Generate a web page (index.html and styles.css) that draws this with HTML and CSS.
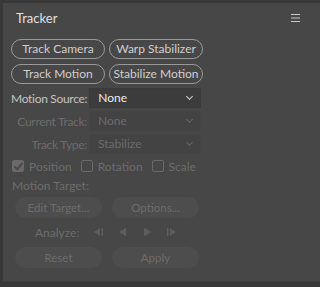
FILE: index.html
```html
<!DOCTYPE html>
<html lang="en">
<head>
    <meta charset="UTF-8">
    <title>Tracker</title>
    <link rel="stylesheet" href="styles.css">
</head>
<body>
    <div class="panel">
        <div class="panel-head">
            <span class="title">Tracker</span>
            <span class="menu">
                <svg width="9" height="8" viewBox="0 0 9 8"><path d="M0 .5h9M0 4h9M0 7.5h9" stroke="#c8c8c8" stroke-width="1"/></svg>
            </span>
        </div>

        <!-- main actions -->
        <div class="btn-grid">
            <button class="pill">Track Camera</button>
            <button class="pill">Warp Stabilizer</button>
            <button class="pill">Track Motion</button>
            <button class="pill">Stabilize Motion</button>
        </div>

        <div class="field">
            <label>Motion Source:</label>
            <div class="select">None<span class="chev"></span></div>
        </div>
        <div class="field off">
            <label>Current Track:</label>
            <div class="select">None<span class="chev"></span></div>
        </div>
        <div class="field off">
            <label>Track Type:</label>
            <div class="select">Stabilize<span class="chev"></span></div>
        </div>

        <div class="checks off">
            <span class="check on"><i class="box"></i>Position</span>
            <span class="check"><i class="box"></i>Rotation</span>
            <span class="check"><i class="box"></i>Scale</span>
        </div>

        <div class="sub off">Motion Target:</div>

        <div class="btn-pair">
            <button class="pill dim">Edit Target...</button>
            <button class="pill dim">Options...</button>
        </div>

        <div class="analyze off">
            <span class="lbl">Analyze:</span>
            <svg width="12" height="10" viewBox="0 0 12 10"><path d="M1 5l6-4v8z" fill="currentColor"/><rect x="8.5" y="1" width="1.6" height="8" fill="currentColor"/></svg>
            <svg width="12" height="10" viewBox="0 0 12 10"><path d="M2 5l7-4.5v9z" fill="currentColor"/></svg>
            <svg width="12" height="10" viewBox="0 0 12 10"><path d="M10 5l-7-4.5v9z" fill="currentColor"/></svg>
            <svg width="12" height="10" viewBox="0 0 12 10"><rect x="1.9" y="1" width="1.6" height="8" fill="currentColor"/><path d="M11 5l-6-4v8z" fill="currentColor"/></svg>
        </div>

        <div class="btn-pair">
            <button class="pill dim">Reset</button>
            <button class="pill dim">Apply</button>
        </div>
    </div>
</body>
</html>
```

FILE: styles.css
```css
* {
    box-sizing: border-box;
}

body {
    margin: 0;
    width: 320px;
    height: 287px;
    background-color: #383838;
    font-family: Lato, sans-serif;
    font-size: 12px;
    color: #c4c4c4;
    overflow: hidden;
}

.panel {
    margin: 3px 0 4px 3px;
    height: 279px;
    background-color: #474747;
    padding: 0 0 0 8px;
    border-bottom: 1px solid #3e3e3e;
}

.panel-head {
    display: flex;
    align-items: center;
    justify-content: space-between;
    height: 30px;
    padding: 0 20px 0 5px;
}

.title {
    font-size: 13px;
    color: #e0e0e0;
}

.menu svg {
    display: block;
}

.btn-grid {
    display: grid;
    grid-template-columns: 94px 94px;
    gap: 5px 4px;
    margin-top: 6px;
}

.pill {
    height: 20px;
    border: 1px solid #9a9a9a;
    border-radius: 11px;
    background: transparent;
    color: #cfcfcf;
    font-family: inherit;
    font-size: 12px;
    padding: 0;
    line-height: 18px;
    white-space: nowrap;
}

.pill.dim {
    border: none;
    background-color: #4d4d4d;
    color: #6c6c6c;
    height: 21px;
    font-size: 11.5px;
}

.field {
    display: flex;
    align-items: center;
    margin-top: 4px;
    height: 20px;
}

.field + .field {
    margin-top: 3px;
}

.field label {
    flex: 0 0 77px;
    text-align: right;
    white-space: nowrap;
    letter-spacing: -0.3px;
    padding-right: 1px;
}

.select {
    position: relative;
    width: 112px;
    height: 20px;
    line-height: 18px;
    margin-left: 1px;
    padding-left: 8px;
    background-color: #3c3c3c;
    border: 1px solid #3a3a3a;
    color: #ececec;
}

.chev {
    position: absolute;
    right: 8px;
    top: 5px;
    width: 5px;
    height: 5px;
    border-right: 1.5px solid #d0d0d0;
    border-bottom: 1.5px solid #d0d0d0;
    transform: rotate(45deg);
}

.off,
.off .select {
    color: #6c6c6c;
}

.off .select {
    background-color: #434343;
    border-color: #454545;
}

.off .chev {
    border-color: #646464;
}

.checks {
    display: flex;
    align-items: center;
    gap: 9px;
    height: 20px;
    margin-top: 2px;
    padding-left: 1px;
}

.check {
    display: flex;
    align-items: center;
    gap: 5px;
}

.box {
    width: 12px;
    height: 12px;
    border: 1px solid #6a6a6a;
    border-radius: 2px;
}

.check.on .box {
    background-color: #6a6a6a;
    position: relative;
}

.check.on .box:after {
    content: "";
    position: absolute;
    left: 3px;
    top: 0;
    width: 3px;
    height: 7px;
    border-right: 2px solid #4a4a4a;
    border-bottom: 2px solid #4a4a4a;
    transform: rotate(40deg);
}

.sub {
    height: 20px;
    line-height: 20px;
    padding-left: 1px;
}

.btn-pair {
    display: grid;
    grid-template-columns: 87px 87px;
    gap: 10px;
    margin: 1px 0 0 4px;
}

.analyze {
    display: flex;
    align-items: center;
    height: 28px;
    padding-left: 24px;
    gap: 12px;
}

.analyze .lbl {
    margin-right: 2px;
}

.analyze svg {
    color: #5c5c5c;
}
```
